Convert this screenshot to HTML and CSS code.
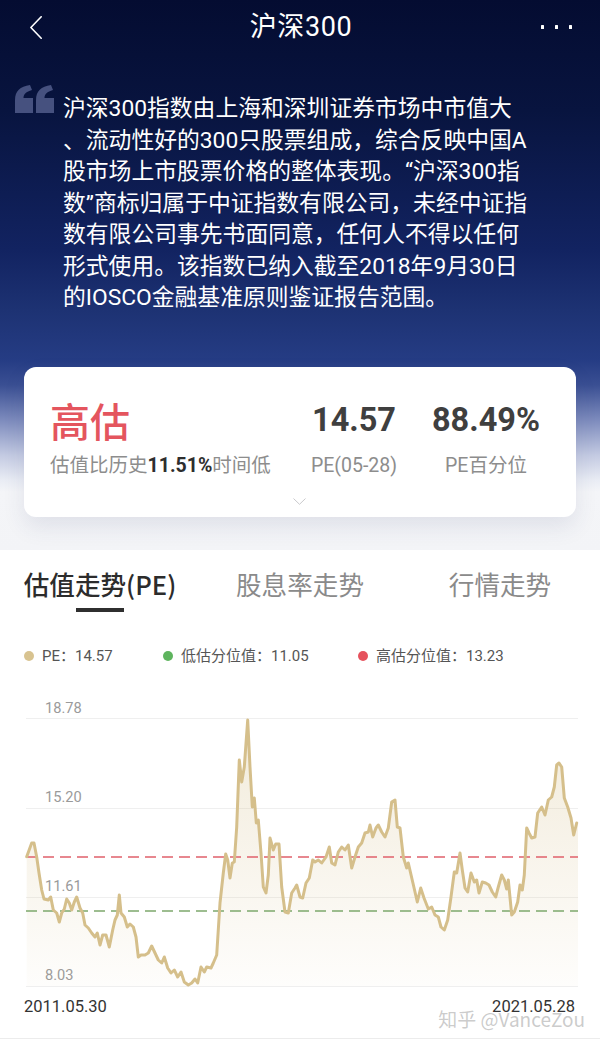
FILE: index.html
```html
<!DOCTYPE html>
<html lang="zh-CN">
<head>
<meta charset="utf-8">
<title>沪深300</title>
<link rel="stylesheet" href="styles.css">
</head>
<body>
<div class="page">
  <header class="hero">
    <nav class="nav">
      <svg class="back" width="12" height="23" viewBox="0 0 12 23"><polyline points="11.2,0.8 0.9,11.5 11.2,22.2" fill="none" stroke="#fff" stroke-width="1.6" stroke-linecap="round" stroke-linejoin="round"/></svg>
      <h1 class="title">沪深300</h1>
      <div class="more"><i></i><i></i><i></i></div>
    </nav>
    <section class="intro">
      <svg class="quote" width="40" height="28" viewBox="0 0 40 28">
        <path d="M0,28 V15 C0,6 5,1.5 15,0 L17,5 C11,6.5 8.5,9.5 8.5,13 H18 V28 Z" fill="#46517f"/>
        <path d="M21,28 V15 C21,6 26,1.5 36,0 L38,5 C32,6.5 29.5,9.5 29.5,13 H39 V28 Z" fill="#46517f"/>
      </svg>
      <p class="desc">
        <span>沪深300指数由上海和深圳证券市场中市值大</span>
        <span>、流动性好的300只股票组成，综合反映中国A</span>
        <span>股市场上市股票价格的整体表现。“沪深300指</span>
        <span>数”商标归属于中证指数有限公司，未经中证指</span>
        <span>数有限公司事先书面同意，任何人不得以任何</span>
        <span>形式使用。该指数已纳入截至2018年9月30日</span>
        <span>的IOSCO金融基准原则鉴证报告范围。</span>
      </p>
    </section>
    <section class="card">
      <div class="card-row">
        <div class="stat stat-main">
          <div class="level">高估</div>
          <div class="label">估值比历史<b>11.51%</b>时间低</div>
        </div>
        <div class="stat">
          <div class="num">14.57</div>
          <div class="label">PE(05-28)</div>
        </div>
        <div class="stat">
          <div class="num">88.49%</div>
          <div class="label">PE百分位</div>
        </div>
      </div>
      <div class="expand"><svg width="13" height="7" viewBox="0 0 13 7"><polyline points="0.5,0.5 6.5,6.3 12.5,0.5" fill="none" stroke="#c9c9cc" stroke-width="1"/></svg></div>
    </section>
  </header>

  <section class="tabs">
    <div class="tab active">估值走势(PE)<span class="bar"></span></div>
    <div class="tab">股息率走势</div>
    <div class="tab">行情走势</div>
  </section>

  <div class="legend">
    <div class="item"><span class="dot tan"></span>PE：14.57</div>
    <div class="item"><span class="dot green"></span>低估分位值：11.05</div>
    <div class="item"><span class="dot red"></span>高估分位值：13.23</div>
  </div>

  <section class="chart">
    <svg class="plot" width="600" height="305" viewBox="0 690 600 305">
      <defs>
        <linearGradient id="fill" x1="0" y1="720" x2="0" y2="986" gradientUnits="userSpaceOnUse">
          <stop offset="0" stop-color="#d6c08c" stop-opacity="0.32"/>
          <stop offset="1" stop-color="#d6c08c" stop-opacity="0.03"/>
        </linearGradient>
      </defs>
      <g stroke="#efefef" stroke-width="1">
        <line x1="26" y1="718.5" x2="578" y2="718.5"/>
        <line x1="26" y1="808.5" x2="578" y2="808.5"/>
        <line x1="26" y1="897.5" x2="578" y2="897.5"/>
        <line x1="26" y1="986.5" x2="578" y2="986.5"/>
      </g>
      <g class="ylab" fill="#9a9a9a" font-size="14.6">
        <text x="45" y="713">18.78</text>
        <text x="45" y="802">15.20</text>
        <text x="45" y="891">11.61</text>
        <text x="45" y="980">8.03</text>
      </g>
      <path fill="url(#fill)" d="M26.7,856.7 L31.7,843 34,843 36.7,857 39,873 41.7,890 44,899 48.3,900 50.7,897 53.3,910 56.7,913 59.3,922 61.7,913 64.3,909 66.7,899 69.3,903 71.7,910 74.3,902 76.7,897 80,908 82.7,913 85,925 88.3,928 91.7,933 95,937 97.3,933 100,945 102.7,935 106,935 109.3,947 112.7,930 115,920 117.3,915 119.3,895 121,913 124.3,917 127.3,927 130,924 133.3,927 136,937 138.3,957 141,955 145,955 148.3,953 151.7,946 155,953 158.3,960 161.7,963 164.3,957 167.7,968 171,973 174.3,970 177.7,977 181,972 184.3,982 188.3,985 191.7,983 195,979 197.7,983 201,967 204.3,972 206.7,967 211,968 213.3,963 216.7,955 220,903 223.3,873 225.7,854 227.7,860 230,878 232.3,863 234.3,862 236.7,827 239.3,760 241.7,782 244.3,767 247.7,720 250,767 252.3,807 254.3,798 256.3,823 258.3,820 261,853 263.3,887 266,893 268.3,875 270,838 273.3,850 275.7,844 279,844 281.7,887 285,912 288.3,913 291.7,893 295,888 296.7,885 300,897 302.7,898 306,883 309.3,878 312.7,860 315,862 318.3,860 321.7,863 326,857 329.3,847 331.7,863 335,865 338.3,852 341.7,847 345,850 348.3,845 351.7,868 355,857 358.3,847 361.7,843 365,833 368.3,832 370,825 372.7,837 376,828 378.3,825 381.7,832 385,837 388.3,828 391.7,802 395,800 397.3,827 400,828 403.3,857 406.7,868 408.3,863 412.7,882 417.3,902 420.7,888 424,898 428.3,909 431.7,907 435,915 438.3,917 441,927 444.3,930 447.7,920 451,897 454.3,872 456.7,873 460,853 462.3,870 465,888 467.7,892 471,873 474.3,882 476.7,880 479,893 482.3,882 485.7,883 489,885 492.3,892 495.7,897 498.3,887 501.7,875 504.3,880 506.7,889 508.3,880 511.7,915 514.3,912 517.7,902 520,885 522.3,890 524.3,875 526.7,828 529,833 531.7,838 535,837 537.7,813 541.7,807 545,815 548.3,800 551.7,797 554.3,787 556.7,765 559,763 561.7,767 564.3,798 567.7,807 571,818 573.7,835 576.7,823 L578,823 578,986 26.7,986 Z"/>
      <line x1="26" y1="857" x2="578" y2="857" stroke="#e0606b" stroke-width="1.3" stroke-dasharray="11 6"/>
      <line x1="26" y1="911" x2="578" y2="911" stroke="#7da86c" stroke-width="1.3" stroke-dasharray="11 6"/>
      <polyline fill="none" stroke="#d5bf8b" stroke-width="3" stroke-linejoin="round" stroke-linecap="round" points="26.7,856.7 31.7,843 34,843 36.7,857 39,873 41.7,890 44,899 48.3,900 50.7,897 53.3,910 56.7,913 59.3,922 61.7,913 64.3,909 66.7,899 69.3,903 71.7,910 74.3,902 76.7,897 80,908 82.7,913 85,925 88.3,928 91.7,933 95,937 97.3,933 100,945 102.7,935 106,935 109.3,947 112.7,930 115,920 117.3,915 119.3,895 121,913 124.3,917 127.3,927 130,924 133.3,927 136,937 138.3,957 141,955 145,955 148.3,953 151.7,946 155,953 158.3,960 161.7,963 164.3,957 167.7,968 171,973 174.3,970 177.7,977 181,972 184.3,982 188.3,985 191.7,983 195,979 197.7,983 201,967 204.3,972 206.7,967 211,968 213.3,963 216.7,955 220,903 223.3,873 225.7,854 227.7,860 230,878 232.3,863 234.3,862 236.7,827 239.3,760 241.7,782 244.3,767 247.7,720 250,767 252.3,807 254.3,798 256.3,823 258.3,820 261,853 263.3,887 266,893 268.3,875 270,838 273.3,850 275.7,844 279,844 281.7,887 285,912 288.3,913 291.7,893 295,888 296.7,885 300,897 302.7,898 306,883 309.3,878 312.7,860 315,862 318.3,860 321.7,863 326,857 329.3,847 331.7,863 335,865 338.3,852 341.7,847 345,850 348.3,845 351.7,868 355,857 358.3,847 361.7,843 365,833 368.3,832 370,825 372.7,837 376,828 378.3,825 381.7,832 385,837 388.3,828 391.7,802 395,800 397.3,827 400,828 403.3,857 406.7,868 408.3,863 412.7,882 417.3,902 420.7,888 424,898 428.3,909 431.7,907 435,915 438.3,917 441,927 444.3,930 447.7,920 451,897 454.3,872 456.7,873 460,853 462.3,870 465,888 467.7,892 471,873 474.3,882 476.7,880 479,893 482.3,882 485.7,883 489,885 492.3,892 495.7,897 498.3,887 501.7,875 504.3,880 506.7,889 508.3,880 511.7,915 514.3,912 517.7,902 520,885 522.3,890 524.3,875 526.7,828 529,833 531.7,838 535,837 537.7,813 541.7,807 545,815 548.3,800 551.7,797 554.3,787 556.7,765 559,763 561.7,767 564.3,798 567.7,807 571,818 573.7,835 576.7,823"/>
    </svg>
    <div class="xlabels"><span>2011.05.30</span><span>2021.05.28</span></div>
    <div class="watermark">知乎 @VanceZou</div>
  </section>
  <div class="footer-line"></div>
</div>
</body>
</html>
```

FILE: styles.css
```css
* { box-sizing: border-box; }
html, body { margin: 0; padding: 0; background: #fff; }
body {
  font-family: "Roboto", "Noto Sans CJK SC", sans-serif;
  color: #333;
}
.page { width: 600px; overflow: hidden; }

.hero {
  background: linear-gradient(to bottom,
    #040c31 0px,
    #08143f 110px,
    #122361 250px,
    #1d3273 310px,
    #253c84 360px,
    #3a4f93 385px,
    #7d8bbd 420px,
    #c3cae2 455px,
    #e9ecf4 480px,
    #f4f5f8 492px,
    #f3f4f7 550px);
  height: 550px;
}

.nav {
  height: 54px;
  display: grid;
  grid-template-columns: 1fr auto 1fr;
  align-items: center;
  padding: 0 28px 0 30px;
}
.back { display: block; }
.title {
  margin: 0;
  font-size: 27px;
  font-weight: 400;
  color: #fff;
  line-height: 54px;
  letter-spacing: 0.6px;
}
.more { justify-self: end; display: flex; gap: 10.5px; align-items: center; }
.more i { width: 3.5px; height: 3.5px; background: #fff; border-radius: 0.5px; display: block; }

.intro {
  display: flex;
  align-items: flex-start;
  padding: 31px 0 0 15px;
}
.quote { display: block; flex: none; margin-right: 8px; }
.desc {
  margin: 8px 0 0;
  color: #fff;
  font-size: 22.8px;
  line-height: 31.5px;
}
.desc span { display: block; white-space: nowrap; }

.card {
  margin: 53px 24px 0;
  background: #fff;
  border-radius: 12px;
  padding: 29px 27px 9px 26px;
  box-shadow: 0 10px 22px rgba(50, 60, 110, 0.10);
}
.card-row {
  display: grid;
  grid-template-columns: 1fr 108px 126px;
  column-gap: 15px;
}
.stat { text-align: center; white-space: nowrap; }
.stat-main { text-align: left; }
.level {
  font-family: "Noto Sans CJK SC", sans-serif;
  font-size: 40px;
  line-height: 48px;
  font-weight: 500;
  color: #e4555e;
}
.num {
  font-size: 32.5px;
  line-height: 48px;
  font-weight: 700;
  color: #3f3f3f;
}
.label {
  margin-top: 10px;
  font-size: 19.5px;
  line-height: 24px;
  color: #8d8d8d;
}
.label b { color: #2e2e2e; font-weight: 700; }
.expand {
  display: flex;
  justify-content: center;
  margin-top: 20px;
  height: 10px;
  align-items: flex-start;
}
.expand svg { display: block; }

.tabs {
  display: grid;
  grid-template-columns: repeat(3, 1fr);
  padding-top: 18px;
}
.tab {
  font-family: "Noto Sans CJK SC", sans-serif;
  text-align: center;
  font-size: 25.6px;
  line-height: 32px;
  color: #8a8a8a;
  display: flex;
  flex-direction: column;
  align-items: center;
}
.tab.active { color: #2c2c2c; font-weight: 500; }
.tab .bar {
  display: block;
  width: 48px;
  height: 4px;
  background: #2f2f2f;
  margin-top: 8px;
}

.legend {
  display: grid;
  grid-template-columns: 139px 195px auto;
  padding-left: 24px;
  margin-top: 33px;
  font-size: 15px;
  line-height: 22px;
  color: #555;
}
.legend .item { display: flex; align-items: center; }
.dot { width: 10px; height: 10px; border-radius: 50%; margin-right: 8px; flex: none; }
.dot.tan { background: #d8c390; }
.dot.green { background: #5eb45e; }
.dot.red { background: #e6525d; }

.chart { position: relative; margin-top: 23px; }
.plot { display: block; }
.ylab { font-family: "Roboto", sans-serif; }
.xlabels {
  display: flex;
  justify-content: space-between;
  padding: 0 25px 0 24px;
  margin-top: 2px;
  font-size: 16.5px;
  line-height: 20px;
  color: #333;
}
.watermark {
  position: absolute;
  right: 15px;
  bottom: -14px;
  font-family: "Noto Sans CJK SC", sans-serif;
  font-size: 19px;
  line-height: 24px;
  color: rgba(160, 160, 160, 0.55);
  text-shadow: 0 0 1px rgba(255,255,255,0.9);
}
.footer-line {
  margin-top: 21px;
  border-top: 1px solid #ececec;
  height: 3px;
}
```
